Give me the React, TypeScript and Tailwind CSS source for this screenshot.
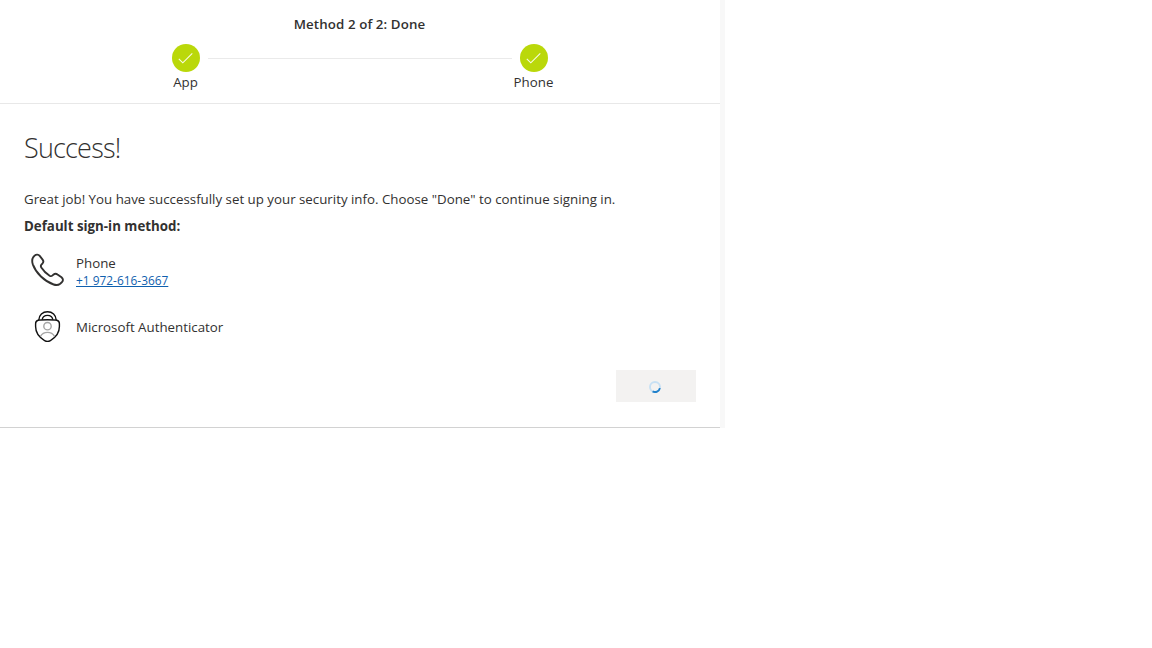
import type { ReactNode } from "react";

const steps = ["App", "Phone"];

function CheckIcon() {
  return (
    <svg width="28" height="28" viewBox="0 0 28 28" fill="none" className="rounded-full bg-[#bad80a]">
      <path d="M6.8 14.8L10.8 18.8L20.3 9.3" stroke="#fff" strokeOpacity="0.9" strokeWidth="1.1" />
    </svg>
  );
}

function PhoneIcon() {
  return (
    <svg width="34" height="34" viewBox="0 0 34 34" fill="none" stroke="#323130" strokeWidth="1.9" strokeLinejoin="round">
      <path d="M3.6 2.6C5.2 1.1 7.4 1.3 8.7 2.9L11.6 6.6C12.7 8.1 12.5 9.5 11.4 10.6L10.4 11.7C9.7 12.5 9.7 13.4 10.3 14.4C12.5 17.8 15.2 20.5 18.6 22.7C19.6 23.3 20.5 23.3 21.3 22.6L22.6 21.5C23.8 20.5 25.2 20.4 26.5 21.4L30.5 24.3C32.3 25.8 32.4 27.8 30.8 29.3L29.2 30.7C27.4 32.2 25.2 32.4 22.6 31.5C13.3 28.2 5.1 20.2 1.8 11.3C0.9 8.5 1 6.1 2.3 4.1Z" />
    </svg>
  );
}

function AuthenticatorIcon() {
  return (
    <svg width="34" height="34" viewBox="0 0 34 34" fill="none">
      <g stroke="#111" strokeWidth="1.4">
        <path d="M7.8 10C8 5 11.6 1.7 16.5 1.7C21.4 1.7 25 5 25.2 10" />
        <path d="M11.2 9.6C11.6 7 13.5 5.4 16.5 5.4C19.5 5.4 21.4 7 21.8 9.6" />
        <path d="M16.5 9.8C20.5 9.8 23.9 9.9 25.8 10.3C27.7 10.7 28.4 12 28.4 13.8V16.6C28.4 22.6 24.6 27.6 19.4 30.6C17.4 31.7 15.6 31.7 13.6 30.6C8.4 27.6 4.6 22.6 4.6 16.6V13.8C4.6 12 5.3 10.7 7.2 10.3C9.1 9.9 12.5 9.8 16.5 9.8Z" />
      </g>
      <g stroke="#a6a6a6" strokeWidth="1.4">
        <circle cx="16.5" cy="16.2" r="3.7" />
        <path d="M9.5 26.4C10.9 23.7 13.4 22.4 16.5 22.4C19.6 22.4 22.1 23.7 23.5 26.4" />
      </g>
    </svg>
  );
}

function Spinner() {
  return (
    <svg width="12" height="12" viewBox="0 0 12 12" fill="none" strokeWidth="1.9">
      <circle cx="6" cy="6" r="5" stroke="#c7e0f4" />
      <path d="M10.9 7.1A5 5 0 0 1 3.6 10.4" stroke="#2080ca" />
    </svg>
  );
}

function MethodRow({ icon, children }: { icon: ReactNode; children: ReactNode }) {
  return (
    <div className="flex h-[57px] items-center gap-[11px] pl-[7px]">
      {icon}
      <div>{children}</div>
    </div>
  );
}

export default function App() {
  return (
    <div className="min-h-screen bg-white font-['Open_Sans',sans-serif] text-[13.3px] leading-5 text-[#323130]">
      <div className="flex w-[725px]">
        <main className="h-[428px] w-[720px] border-b border-[#d2d2d2]">
          <header className="h-[104px] border-b border-[#e8e8e8] pt-3.5">
            <h1 className="pr-px text-center font-semibold tracking-[0.1px]">Method 2 of 2: Done</h1>
            <div className="mx-auto mt-2.5 flex w-[376px] items-center gap-2">
              <CheckIcon />
              <div className="h-px flex-1 bg-[#eaeaea]" />
              <CheckIcon />
            </div>
            <div className="mx-auto flex w-[408px] justify-between pr-px">
              {steps.map((step) => (
                <span key={step} className="w-[59px] text-center">{step}</span>
              ))}
            </div>
          </header>
          <section className="px-6 pt-6">
            <h2 className="text-[27px] leading-10 font-light tracking-[-0.8px]">Success!</h2>
            <p className="mt-[21px] whitespace-nowrap">
              Great job! You have successfully set up your security info. Choose "Done" to continue signing in.
            </p>
            <p className="mt-[7px] font-bold">Default sign-in method:</p>
            <div className="mt-[5px]">
              <MethodRow icon={<PhoneIcon />}>
                <div className="pt-[3px] leading-[18px]">Phone</div>
                <a href="tel:+19726163667" className="block text-[11.9px] leading-[17px] text-[#0f60ae] underline">+1 972-616-3667</a>
              </MethodRow>
              <MethodRow icon={<AuthenticatorIcon />}>Microsoft Authenticator</MethodRow>
            </div>
            <div className="mt-[15px] flex justify-end">
              <button type="button" disabled className="flex h-8 w-20 items-center justify-center bg-[#f3f2f1] pt-px pr-0.5">
                <Spinner />
              </button>
            </div>
          </section>
        </main>
        <div className="h-[428px] w-[5px] bg-[#f8f8f8]" />
      </div>
    </div>
  );
}
